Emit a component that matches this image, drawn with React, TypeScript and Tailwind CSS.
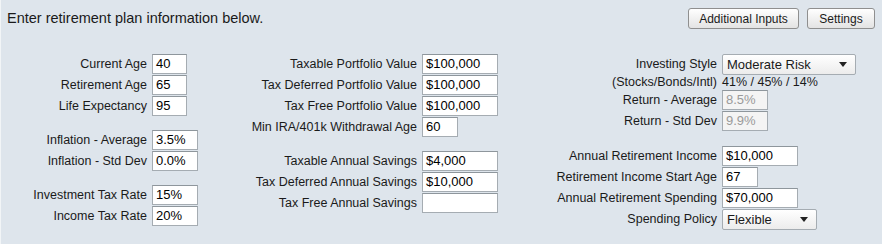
import React from "react";

type Row = { label: string; value?: string; w: number; disabled?: boolean };

const Field = ({ value, w, disabled }: { value?: string; w: number; disabled?: boolean }) => (
  <div
    className={`h-[20px] border border-[#a5acb2] border-t-[#8e969c] pl-[3px] leading-[18px] text-[13px] ${
      disabled ? "bg-[#f4f4f4] text-[#9a9a9a]" : "bg-white text-black"
    }`}
    style={{ width: w }}
  >
    {value}
  </div>
);

const Select = ({ value, w }: { value: string; w: number }) => (
  <div
    className="h-[21px] flex items-center justify-between rounded-[2px] border border-[#a5acb2] bg-gradient-to-b from-white to-[#ececec] pl-[4px] pr-[8px] leading-[18px] text-[13px]"
    style={{ width: w }}
  >
    <span>{value}</span>
    <svg width="8" height="5" viewBox="0 0 8 5">
      <path d="M0 0h8L4 5z" fill="#222" />
    </svg>
  </div>
);

const Group = ({ rows, labelW }: { rows: Row[]; labelW: number }) => (
  <div className="grid gap-y-[1px] gap-x-[5px]" style={{ gridTemplateColumns: `${labelW}px auto` }}>
    {rows.map((r) => (
      <React.Fragment key={r.label}>
        <div className="text-right leading-[20px] whitespace-nowrap">{r.label}</div>
        <Field value={r.value} w={r.w} disabled={r.disabled} />
      </React.Fragment>
    ))}
  </div>
);

const Button = ({ children, w }: { children: React.ReactNode; w: number }) => (
  <div
    className="h-[21px] flex items-center justify-center rounded-[3px] border border-[#8f8f8f] bg-gradient-to-b from-white to-[#e3e3e3] text-[12px]"
    style={{ width: w }}
  >
    {children}
  </div>
);

export default function App() {
  return (
    <div
      className="w-[882px] h-[244px] bg-[#dee5ec] border-l border-[#f2f5f7] text-[12.5px] text-[#1a1a1a] overflow-hidden"
      style={{ fontFamily: '"Liberation Sans", Arial, sans-serif' }}
    >
      {/* header */}
      <div className="flex items-start justify-between pt-[8px] pr-[7px]">
        <div className="pl-[6px] pt-[1px] text-[14.5px] leading-[18px]">Enter retirement plan information below.</div>
        <div className="flex gap-[8px]">
          <Button w={111}>Additional Inputs</Button>
          <Button w={68}>Settings</Button>
        </div>
      </div>

      <div className="flex mt-[25px]">
        {/* column 1 */}
        <div className="w-[199px] flex flex-col gap-[14px]">
          <Group
            labelW={146}
            rows={[
              { label: "Current Age", value: "40", w: 35 },
              { label: "Retirement Age", value: "65", w: 35 },
              { label: "Life Expectancy", value: "95", w: 35 },
            ]}
          />
          <Group
            labelW={146}
            rows={[
              { label: "Inflation - Average", value: "3.5%", w: 46 },
              { label: "Inflation - Std Dev", value: "0.0%", w: 46 },
            ]}
          />
          <Group
            labelW={146}
            rows={[
              { label: "Investment Tax Rate", value: "15%", w: 46 },
              { label: "Income Tax Rate", value: "20%", w: 46 },
            ]}
          />
        </div>

        {/* column 2 */}
        <div className="w-[340px] flex flex-col gap-[14px]">
          <Group
            labelW={217}
            rows={[
              { label: "Taxable Portfolio Value", value: "$100,000", w: 76 },
              { label: "Tax Deferred Portfolio Value", value: "$100,000", w: 76 },
              { label: "Tax Free Portfolio Value", value: "$100,000", w: 76 },
              { label: "Min IRA/401k Withdrawal Age", value: "60", w: 36 },
            ]}
          />
          <Group
            labelW={217}
            rows={[
              { label: "Taxable Annual Savings", value: "$4,000", w: 76 },
              { label: "Tax Deferred Annual Savings", value: "$10,000", w: 76 },
              { label: "Tax Free Annual Savings", value: "", w: 76 },
            ]}
          />
        </div>

        {/* column 3 */}
        <div className="flex flex-col gap-[15px]">
          <div className="grid grid-cols-[177px_auto] gap-x-[5px] gap-y-[1px]">
            <div className="text-right leading-[20px]">Investing Style</div>
            <Select value="Moderate Risk" w={134} />
            <div className="text-right leading-[13px]">(Stocks/Bonds/Intl)</div>
            <div className="leading-[13px]">41% / 45% / 14%</div>
            <div className="text-right leading-[20px]">Return - Average</div>
            <Field value="8.5%" w={46} disabled />
            <div className="text-right leading-[20px]">Return - Std Dev</div>
            <Field value="9.9%" w={46} disabled />
          </div>
          <div className="grid grid-cols-[177px_auto] gap-x-[5px] gap-y-[1px]">
            <div className="text-right leading-[20px] whitespace-nowrap">Annual Retirement Income</div>
            <Field value="$10,000" w={76} />
            <div className="text-right leading-[20px] whitespace-nowrap">Retirement Income Start Age</div>
            <Field value="67" w={36} />
            <div className="text-right leading-[20px] whitespace-nowrap">Annual Retirement Spending</div>
            <Field value="$70,000" w={76} />
            <div className="text-right leading-[21px]">Spending Policy</div>
            <Select value="Flexible" w={95} />
          </div>
        </div>
      </div>
    </div>
  );
}
